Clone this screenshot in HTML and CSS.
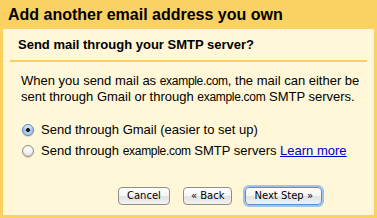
FILE: index.html
```html
<!DOCTYPE html>
<html>
<head>
<meta charset="utf-8">
<link rel="stylesheet" href="styles.css">
</head>
<body>
<div class="dialog">
  <div class="title">Add another email address you own</div>
  <div class="panel">
    <div class="subhead">Send mail through your SMTP server?</div>
    <div class="sep"></div>
    <p class="desc">When you send mail as <span class="dom">example.com</span>, the mail can either be sent through Gmail or through <span class="dom">example.com</span> SMTP servers.</p>
    <div class="options">
      <label class="opt"><input type="radio" name="via" class="radio" checked><span>Send through Gmail (easier to set up)</span></label>
      <label class="opt"><input type="radio" name="via" class="radio"><span>Send through <span class="dom">example.com</span> SMTP servers <a href="#" class="link">Learn more</a></span></label>
    </div>
    <div class="buttons">
      <button class="btn">Cancel</button>
      <button class="btn back">« Back</button>
      <button class="btn focus">Next Step »</button>
    </div>
  </div>
</div>
</body>
</html>
```
FILE: styles.css
```css
html, body {
  margin: 0;
  padding: 0;
  background: #fad163;
}
body {
  width: 377px;
  height: 218px;
  overflow: hidden;
  font-family: "Liberation Sans", Arial, sans-serif;
  color: #000;
}
.dialog {
  padding: 0 3px 3px 3px;
}
.title {
  height: 29px;
  box-sizing: border-box;
  padding: 6px 0 0 5px;
  font-size: 16px;
  font-weight: bold;
  line-height: 18px;
}
.panel {
  background: #fff7d7;
  height: 186px;
  padding: 0 7px;
  display: flex;
  flex-direction: column;
}
.subhead {
  font-size: 13px;
  font-weight: bold;
  line-height: 15px;
  padding: 8px 0 0 8px;
  height: 31px;
  box-sizing: border-box;
}
.sep {
  height: 2px;
  background: #fad163;
}
.desc {
  margin: 0;
  padding: 11px 0 0 11px;
  font-size: 13px;
  line-height: 15px;
}
.dom {
  font-size: 12px;
  letter-spacing: -0.3px;
}
.options {
  padding: 17px 0 0 12px;
  display: flex;
  flex-direction: column;
  gap: 6px;
}
.opt {
  display: flex;
  align-items: center;
  font-size: 13px;
  line-height: 15px;
  white-space: pre;
}
.radio {
  appearance: none;
  -webkit-appearance: none;
  width: 12px;
  height: 12px;
  margin: 0 7px 0 0;
  border-radius: 50%;
  border: 1px solid #8f8f8f;
  box-sizing: border-box;
  background: radial-gradient(circle at 50% 30%, #ffffff 0%, #f2f2f2 45%, #cfcfcf 100%);
  box-shadow: 0 1px 1px rgba(0,0,0,0.15);
}
.radio:checked {
  border-color: #5a7fb3;
  background: radial-gradient(circle at 50% 50%, #1a1a1a 0 1.6px, transparent 2.2px), linear-gradient(#dfeefc, #9cc3ec 55%, #b9d7f6);
}
.link {
  color: #0000cc;
  text-decoration: underline;
}
.buttons {
  margin-top: auto;
  margin-bottom: 10px;
  padding-right: 45px;
  display: flex;
  justify-content: flex-end;
  gap: 13px;
}
.btn {
  font-family: "DejaVu Sans", sans-serif;
  font-size: 10px;
  height: 18px;
  padding: 0 8px;
  border: 1px solid #8e8e8e;
  border-radius: 4px;
  background: linear-gradient(#ffffff, #f4f4f4 50%, #e2e2e2 51%, #f1f1f1);
  color: #000;
  line-height: 16px;
}
.btn.back {
  padding: 0 7px;
}
.btn.focus {
  border-color: #5b8ccc;
  box-shadow: 0 0 0 2px #9fc3ec;
  padding: 0 8px;
}
```
